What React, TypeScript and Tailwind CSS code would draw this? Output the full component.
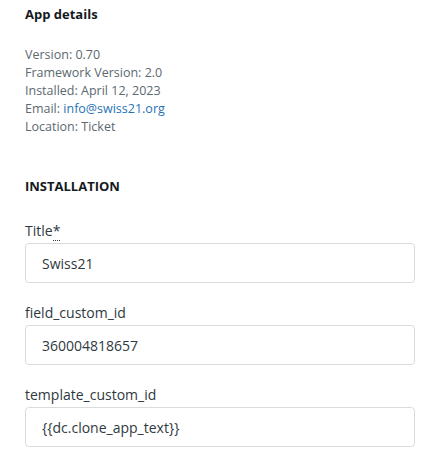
import React from 'react';

const details = [
  { label: 'Version', value: '0.70' },
  { label: 'Framework Version', value: '2.0' },
  { label: 'Installed', value: 'April 12, 2023' },
];

const fields = [
  { id: 'title', label: 'Title', required: true, value: 'Swiss21' },
  { id: 'field_custom_id', label: 'field_custom_id', value: '360004818657' },
  { id: 'template_custom_id', label: 'template_custom_id', value: '{{dc.clone_app_text}}' },
];

export default function App() {
  return (
    <div className="w-[444px] h-[462px] bg-white pl-[25px] pr-[29px] pt-[4px] font-['Open_Sans',sans-serif] text-[#2f3941]">
      {/* App details */}
      <h2 className="text-[13px] font-bold leading-5 text-[#151a1e]">App details</h2>
      <div className="mt-[22px] text-[12.5px] leading-[18px] text-[#5c6970]">
        {details.map((d) => (
          <div key={d.label}>
            {d.label}: {d.value}
          </div>
        ))}
        <div>
          Email: <a href="#" className="text-[#1f73b7]">info@swiss21.org</a>
        </div>
        <div>Location: Ticket</div>
      </div>

      {/* Installation settings */}
      <h3 className="mt-[40px] text-[13px] font-bold leading-5 text-[#151a1e]">INSTALLATION</h3>
      <form className="mt-[25px] flex flex-col gap-[20px]">
        {fields.map((f) => (
          <div key={f.id} className="flex flex-col">
            <label htmlFor={f.id} className="text-[14px] leading-5 mb-[2px]">
              {f.label}
              {f.required && (
                <abbr title="required" className="no-underline border-b border-dotted border-[#2f3941]">
                  *
                </abbr>
              )}
            </label>
            <input
              id={f.id}
              defaultValue={f.value}
              className="h-[40px] w-full rounded-[4px] border border-[#d8dcde] bg-white px-4 text-[14px] text-[#2f3941] outline-none"
            />
          </div>
        ))}
      </form>
    </div>
  );
}
